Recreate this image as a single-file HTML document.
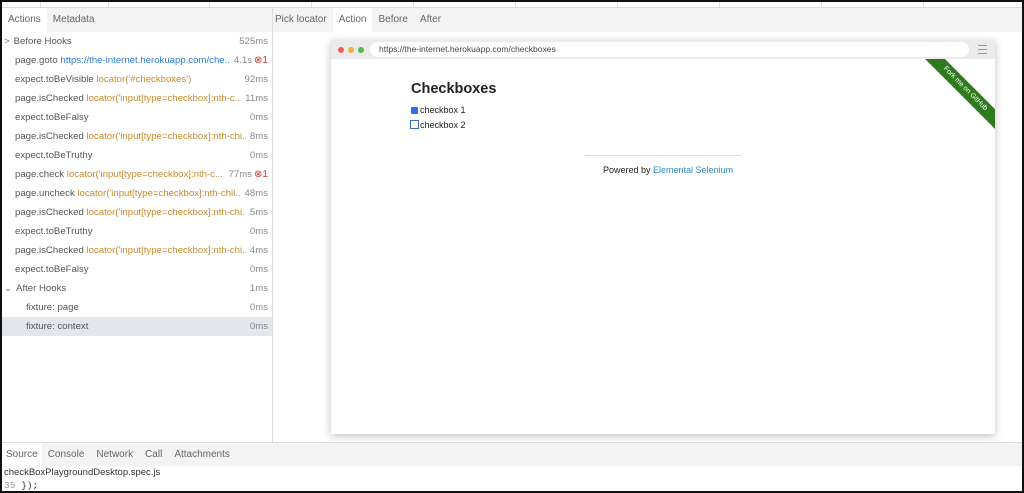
<!DOCTYPE html>
<html><head><style>
*{box-sizing:border-box;margin:0;padding:0}
body{width:1024px;height:493px;overflow:hidden;background:#fff;font-family:"Liberation Sans",sans-serif;font-size:10px;color:#555;position:relative}
.frame{position:absolute;left:0;top:0;width:1024px;height:493px;border:2px solid #111;pointer-events:none}
.top{position:absolute;left:0;top:0;width:1024px;height:8px;background:#fff;border-bottom:1px solid #ddd}
.vl{position:absolute;top:0;width:1px;height:8px;background:#ddd}
.tabs{position:absolute;top:8px;height:24px;background:#f3f3f3;display:flex;align-items:center}
.tab{padding:0 6px;height:24px;line-height:24px;color:#666;font-size:10px}
.tab.sel{background:#fff}
.left{position:absolute;left:2px;top:32px;width:270px}
.row{height:19px;line-height:19px;display:flex;white-space:nowrap;padding-right:4px;font-size:9.6px;color:#555}
.row .n{flex:1;overflow:hidden}
.row .t{color:#888;margin-left:4px}
.o{color:#c98a2e}.b{color:#2a7ae2}
.x{color:#c33;font-size:10px;margin-left:2px}
.sel2{background:#e4e6ee}
</style></head><body>
<div class="top"></div>
<div class="vl" style="left:40px"></div><div class="vl" style="left:108px"></div><div class="vl" style="left:209px"></div><div class="vl" style="left:311px"></div><div class="vl" style="left:413px"></div><div class="vl" style="left:515px"></div><div class="vl" style="left:617px"></div><div class="vl" style="left:719px"></div><div class="vl" style="left:821px"></div><div class="vl" style="left:923px"></div>
<div class="tabs" style="left:2px;width:270px"><div class="tab sel">Actions</div><div class="tab">Metadata</div></div>
<div style="position:absolute;left:272px;top:8px;width:1px;height:434px;background:#ddd"></div>
<div class="tabs" style="left:273px;width:749px"><div class="tab" style="padding-left:2px">Pick locator</div><div class="tab sel">Action</div><div class="tab">Before</div><div class="tab">After</div></div>
<div class="left">
<div class="row"><span class="n"><span style="color:#777;padding:0 4px 0 2px">&gt;</span>Before Hooks</span><span class="t">525ms</span></div>
<div class="row" style="padding-left:13px"><span class="n">page.goto <span class="b">https://the-internet.herokuapp.com/che...</span></span><span class="t">4.1s</span><span class="x">⊗1</span></div>
<div class="row" style="padding-left:13px"><span class="n">expect.toBeVisible <span class="o">locator('#checkboxes')</span></span><span class="t">92ms</span></div>
<div class="row" style="padding-left:13px"><span class="n">page.isChecked <span class="o">locator('input[type=checkbox]:nth-c...</span></span><span class="t">11ms</span></div>
<div class="row" style="padding-left:13px"><span class="n">expect.toBeFalsy</span><span class="t">0ms</span></div>
<div class="row" style="padding-left:13px"><span class="n">page.isChecked <span class="o">locator('input[type=checkbox]:nth-chi...</span></span><span class="t">8ms</span></div>
<div class="row" style="padding-left:13px"><span class="n">expect.toBeTruthy</span><span class="t">0ms</span></div>
<div class="row" style="padding-left:13px"><span class="n">page.check <span class="o">locator('input[type=checkbox]:nth-c...</span></span><span class="t">77ms</span><span class="x">⊗1</span></div>
<div class="row" style="padding-left:13px"><span class="n">page.uncheck <span class="o">locator('input[type=checkbox]:nth-chil...</span></span><span class="t">48ms</span></div>
<div class="row" style="padding-left:13px"><span class="n">page.isChecked <span class="o">locator('input[type=checkbox]:nth-chi...</span></span><span class="t">5ms</span></div>
<div class="row" style="padding-left:13px"><span class="n">expect.toBeTruthy</span><span class="t">0ms</span></div>
<div class="row" style="padding-left:13px"><span class="n">page.isChecked <span class="o">locator('input[type=checkbox]:nth-chi...</span></span><span class="t">4ms</span></div>
<div class="row" style="padding-left:13px"><span class="n">expect.toBeFalsy</span><span class="t">0ms</span></div>
<div class="row"><span class="n"><span style="color:#777;padding:0 4px 0 2px">⌄</span>After Hooks</span><span class="t">1ms</span></div>
<div class="row" style="padding-left:24px"><span class="n">fixture: page</span><span class="t">0ms</span></div>
<div class="row sel2" style="padding-left:24px"><span class="n">fixture: context</span><span class="t">0ms</span></div>
</div>
<div style="position:absolute;left:331px;top:40px;width:664px;height:394px;background:#fff;box-shadow:0 2px 8px rgba(0,0,0,.25)">
<div style="height:19px;background:#ebebed;position:relative">
<span style="position:absolute;left:7px;top:7px;width:6px;height:6px;border-radius:3px;background:#e95f56"></span>
<span style="position:absolute;left:17px;top:7px;width:6px;height:6px;border-radius:3px;background:#e7b73d"></span>
<span style="position:absolute;left:27px;top:7px;width:6px;height:6px;border-radius:3px;background:#5ab74a"></span>
<div style="position:absolute;left:39px;top:2px;width:599px;height:15px;background:#fff;border-radius:8px;font-size:8.5px;line-height:15px;padding-left:9px;color:#444">https://the-internet.herokuapp.com/checkboxes</div>
<div style="position:absolute;left:647px;top:5px;width:9px;height:9px;border-top:1.5px solid #999;border-bottom:1.5px solid #999"><div style="margin-top:2.5px;border-top:1.5px solid #999"></div></div>
</div>
<div style="position:absolute;right:0;top:19px;width:70px;height:70px;overflow:hidden">
<div style="position:absolute;left:-20px;top:23px;width:120px;height:14px;background:#2f7a1f;transform:rotate(45deg);color:#fff;font-size:7px;line-height:14px;text-align:center">Fork me on GitHub</div></div>
<div style="position:absolute;left:80px;top:41px;font-size:14.5px;font-weight:bold;color:#222">Checkboxes</div>
<div style="position:absolute;left:80px;top:65px;font-size:9px;color:#222"><span style="display:inline-block;width:7px;height:7px;background:#2a72e8;border-radius:1px;vertical-align:-1px;margin-right:2px"></span>checkbox 1</div>
<div style="position:absolute;left:79px;top:80px;font-size:9px;color:#222"><span style="display:inline-block;width:9px;height:9px;border:1.5px solid #3c6ec4;vertical-align:-1px;margin-right:1px"></span>checkbox 2</div>
<div style="position:absolute;left:254px;top:115px;width:156px;border-top:1px solid #ddd"></div>
<div style="position:absolute;left:272px;top:125px;font-size:9px;color:#222">Powered by <span style="color:#2a8ac8">Elemental Selenium</span></div>
</div>
<div style="position:absolute;left:2px;top:442px;width:1020px;height:1px;background:#ddd"></div>
<div class="tabs" style="left:2px;top:443px;width:1020px;height:23px"><div class="tab sel" style="height:23px;line-height:23px;padding:0 4px">Source</div><div class="tab">Console</div><div class="tab">Network</div><div class="tab">Call</div><div class="tab">Attachments</div></div>
<div style="position:absolute;left:4px;top:466px;font-size:9.5px;color:#333;line-height:13px">checkBoxPlaygroundDesktop.spec.js</div>
<div style="position:absolute;left:4px;top:480px;font-size:9.5px;font-family:'Liberation Mono',monospace;color:#333;line-height:12px"><span style="color:#999">35</span> });</div>
<div class="frame"></div>
</body></html>
